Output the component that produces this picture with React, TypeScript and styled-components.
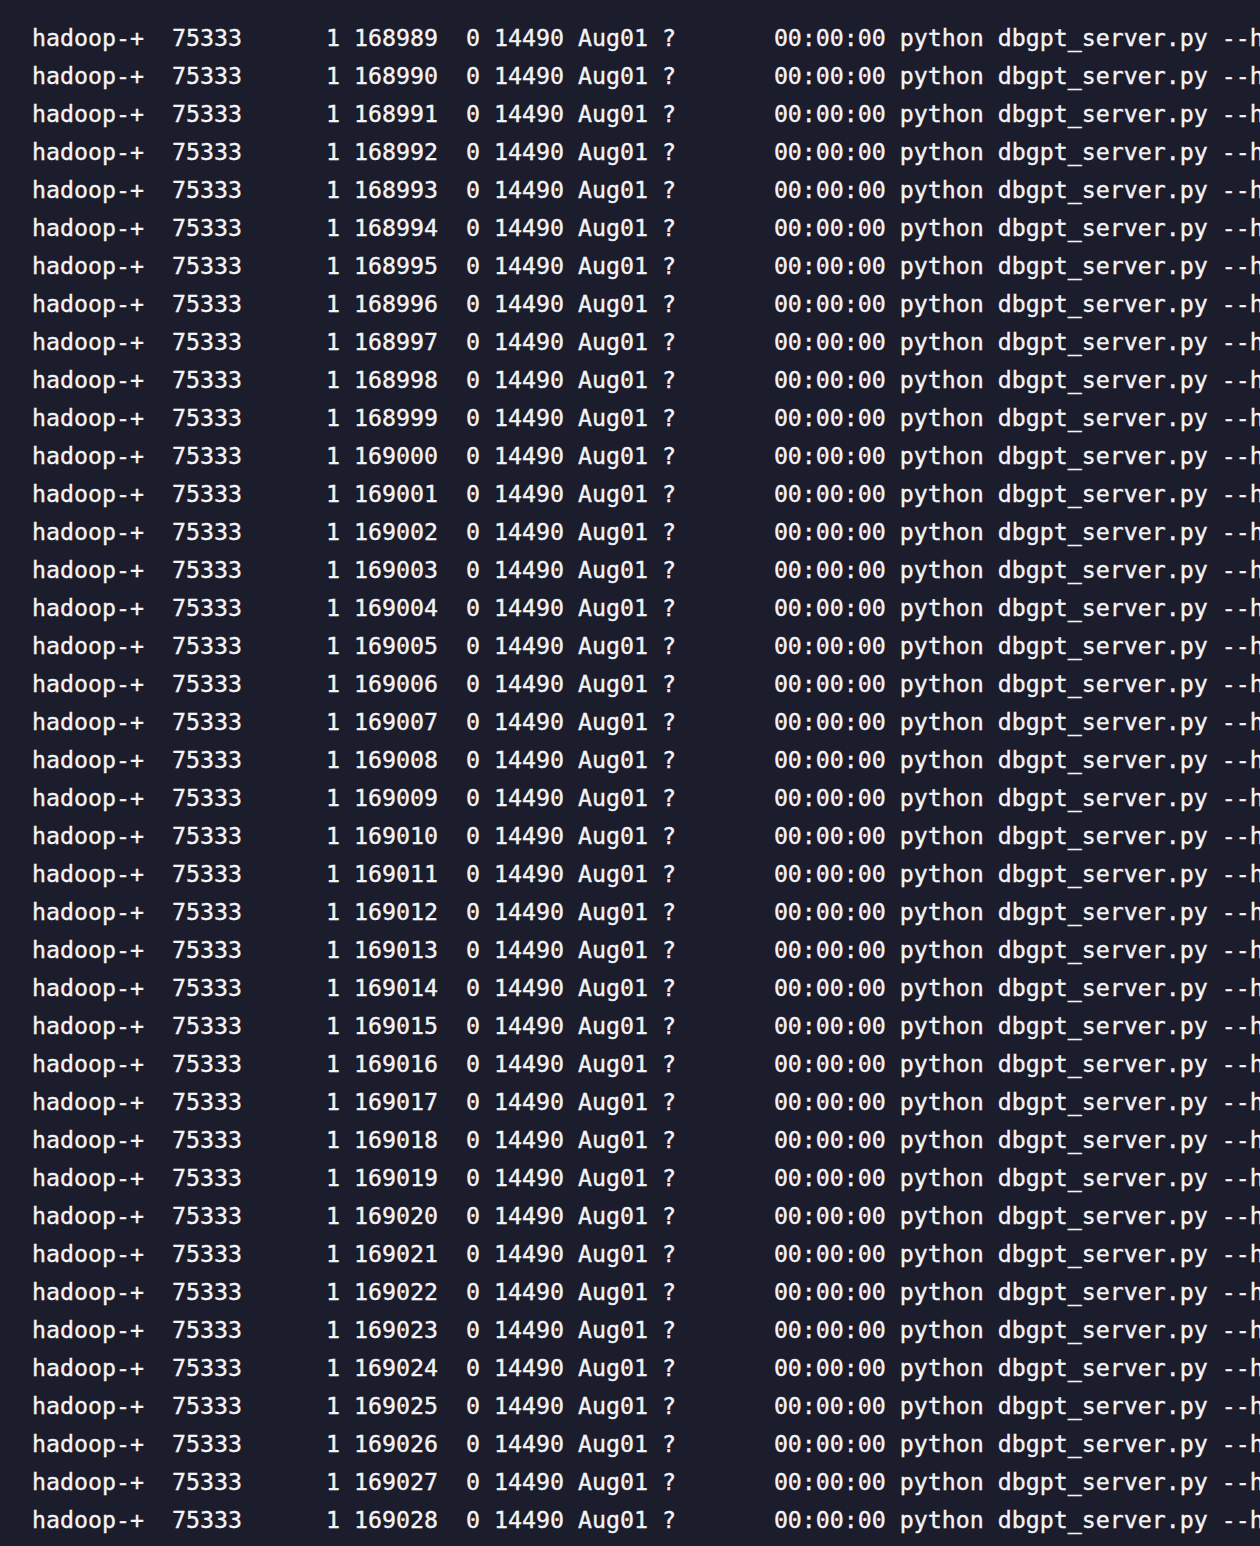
import styled, {createGlobalStyle} from "styled-components";

const GlobalStyle = createGlobalStyle`
  html,
  body {
    margin: 0;
    padding: 0;
    background-color: #1b1c2c;
  }
`;

const Terminal = styled.div`
  width: 1260px;
  min-height: 1546px;
  box-sizing: border-box;
  padding: 19px 0 7px 32px;
  background-color: #1b1c2c;
  color: #f4f4f6;
  font-family: "DejaVu Sans Mono", "Liberation Mono", monospace;
  font-size: 23.25px;
  -webkit-text-stroke: 0.35px #f4f4f6;
  overflow: hidden;
`;

const Line = styled.div`
  height: 38px;
  line-height: 38px;
  white-space: pre;
  overflow: hidden;
`;

const FIRST_LWP = 168989;
const ROWS = 40;

// ps -eLf style row, command is cut by the right edge like in the terminal
const psLine = (lwp: number) =>
  `hadoop-+  75333      1 ${lwp}  0 14490 Aug01 ?       00:00:00 python dbgpt_server.py --host 0.0.0.0`;

const App = () => {
  const lines = Array.from({length: ROWS}, (_, i) => FIRST_LWP + i);

  return (
    <>
      <GlobalStyle />
      <Terminal>
        {lines.map((lwp) => (
          <Line key={lwp}>{psLine(lwp)}</Line>
        ))}
      </Terminal>
    </>
  );
};

export default App;
